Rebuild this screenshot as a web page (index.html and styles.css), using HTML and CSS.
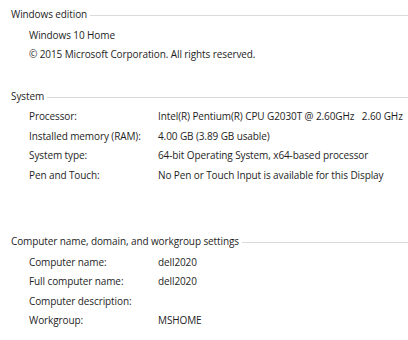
FILE: index.html
```html
<!DOCTYPE html>
<html lang="en">
<head>
    <meta charset="UTF-8">
    <meta name="viewport" content="width=device-width, initial-scale=1.0">
    <title>System</title>
    <link rel="stylesheet" href="styles.css">
</head>
<body>
    <div id="system-info">
        <section class="group group-edition">
            <div class="group-title"><span>Windows edition</span><div class="rule"></div></div>
            <div class="group-body">
                <p class="line">Windows 10 Home</p>
                <p class="line">© 2015 Microsoft Corporation. All rights reserved.</p>
            </div>
        </section>

        <section class="group group-system">
            <div class="group-title"><span>System</span><div class="rule"></div></div>
            <div class="group-body">
                <div class="row"><span class="label">Processor:</span><span class="value">Intel(R) Pentium(R) CPU G2030T @ 2.60GHz   2.60 GHz</span></div>
                <div class="row"><span class="label">Installed memory (RAM):</span><span class="value">4.00 GB (3.89 GB usable)</span></div>
                <div class="row"><span class="label">System type:</span><span class="value">64-bit Operating System, x64-based processor</span></div>
                <div class="row"><span class="label">Pen and Touch:</span><span class="value">No Pen or Touch Input is available for this Display</span></div>
            </div>
        </section>

        <section class="group group-computer">
            <div class="group-title"><span>Computer name, domain, and workgroup settings</span><div class="rule"></div></div>
            <div class="group-body">
                <div class="row"><span class="label">Computer name:</span><span class="value">dell2020</span></div>
                <div class="row"><span class="label">Full computer name:</span><span class="value">dell2020</span></div>
                <div class="row"><span class="label">Computer description:</span><span class="value"></span></div>
                <div class="row"><span class="label">Workgroup:</span><span class="value">MSHOME</span></div>
            </div>
        </section>
    </div>
</body>
</html>
```

FILE: styles.css
```css
*{
    margin:0;
    padding:0;
    box-sizing:border-box;
}

body{
    background-color:#fff;
    color:#1e1e1e;
    font-family:"Open Sans", "Noto Sans", sans-serif;
    font-size:10px;
    letter-spacing:-0.1px;
}

#system-info{
    width:408px;
    padding:4px 0 0 11px;
}

.group-title{
    display:flex;
    align-items:center;
    height:20px;
    line-height:20px;
}

.group-title span{
    white-space:nowrap;
}

.group-title .rule{
    flex:1;
    height:1px;
    margin-left:3px;
    margin-top:3px;
    background-color:#dadada;
}

.group-body{
    padding-left:18px;
    margin-top:1.5px;
}

.line, .row{
    height:19.5px;
    line-height:19.5px;
    white-space:pre;
}

.row{
    display:grid;
    grid-template-columns:129px 1fr;
}

.group-system{
    margin-top:21px;
}

.group-computer{
    margin-top:46px;
}
```
